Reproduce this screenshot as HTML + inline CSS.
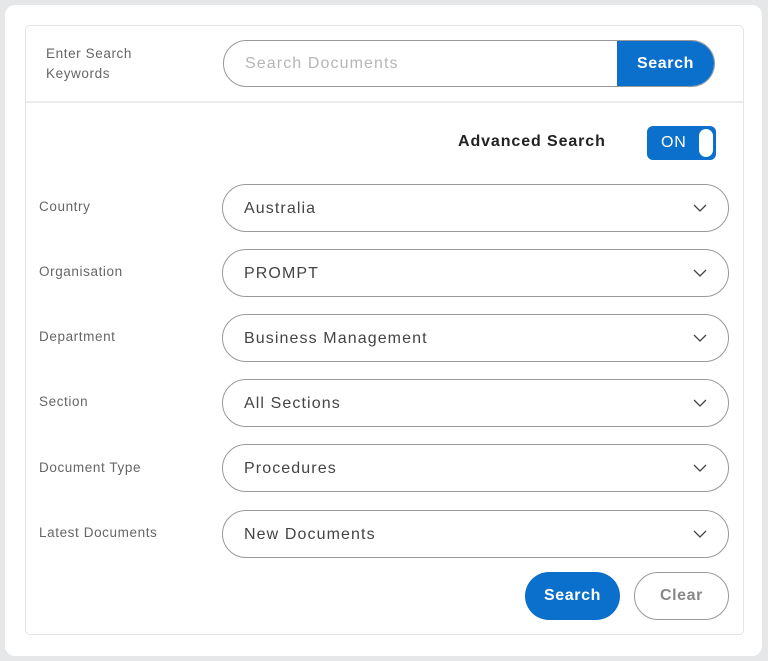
<!DOCTYPE html>
<html><head><style>
*{box-sizing:border-box;margin:0;padding:0}
body{width:768px;height:661px;background:#e6e7e8;font-family:"Liberation Sans",sans-serif;position:relative;overflow:hidden}
.card{position:absolute;left:5px;top:5px;width:757px;height:651px;background:#fff;border-radius:10px}
.inner{position:absolute;left:25px;top:25px;width:719px;height:610px;border:1px solid #e4e4e4;border-radius:5px}
.div{position:absolute;left:26px;top:101px;width:717px;height:2px;background:#ececec}
.lab{position:absolute;color:#666;font-size:13.5px;letter-spacing:0.6px}
.sbox{position:absolute;left:223px;top:40px;width:492px;height:47px;border:1px solid #999;border-radius:24px;overflow:hidden}
.sbox span{position:absolute;left:21px;top:14px;color:#b5b5b5;font-size:16px;letter-spacing:1.1px}
.sbtn{position:absolute;right:0;top:0;width:97px;height:47px;background:#0b6fcc;color:#fff;font-weight:bold;font-size:16px;text-align:center;line-height:46px;letter-spacing:0.6px}
.adv{position:absolute;left:458px;top:133px;font-weight:bold;font-size:16px;color:#222;letter-spacing:0.9px}
.tog{position:absolute;left:647px;top:126px;width:69px;height:34px;background:#0b6fcc;border-radius:6px;color:#fff;font-size:16px}
.tog span{position:absolute;left:14px;top:8px;letter-spacing:0.8px}
.tog i{position:absolute;right:3px;top:3px;width:14px;height:28px;background:#fff;border-radius:7px}
.sel{position:absolute;left:222px;width:507px;height:48px;border:1px solid #999;border-radius:24px;font-size:16px;color:#444;letter-spacing:1.1px}
.sel span{position:absolute;left:21px;top:15px}
.sel svg{position:absolute;right:21px;top:19px}
.b1{position:absolute;left:525px;top:572px;width:95px;height:48px;background:#0b6fcc;border-radius:24px;color:#fff;font-weight:bold;font-size:16px;text-align:center;line-height:48px;letter-spacing:0.6px}
.b2{position:absolute;left:634px;top:572px;width:95px;height:48px;border:1px solid #999;border-radius:24px;color:#888;font-weight:bold;font-size:16px;text-align:center;line-height:46px;letter-spacing:0.6px}
</style></head><body>
<div class="card"></div><div class="inner"></div><div class="div"></div>
<div class="lab" style="left:46px;top:44px;line-height:20px">Enter Search<br>Keywords</div>
<div class="sbox"><span>Search Documents</span><div class="sbtn">Search</div></div>
<div class="adv">Advanced Search</div>
<div class="tog"><span>ON</span><i></i></div>
<div class="lab" style="left:39px;top:199px">Country</div>
<div class="sel" style="top:184px"><span>Australia</span><svg width="14" height="9"><path d="M1 1l6 6 6-6" fill="none" stroke="#444" stroke-width="1.3"/></svg></div>
<div class="lab" style="left:39px;top:264px">Organisation</div>
<div class="sel" style="top:249px"><span>PROMPT</span><svg width="14" height="9"><path d="M1 1l6 6 6-6" fill="none" stroke="#444" stroke-width="1.3"/></svg></div>
<div class="lab" style="left:39px;top:329px">Department</div>
<div class="sel" style="top:314px"><span>Business Management</span><svg width="14" height="9"><path d="M1 1l6 6 6-6" fill="none" stroke="#444" stroke-width="1.3"/></svg></div>
<div class="lab" style="left:39px;top:394px">Section</div>
<div class="sel" style="top:379px"><span>All Sections</span><svg width="14" height="9"><path d="M1 1l6 6 6-6" fill="none" stroke="#444" stroke-width="1.3"/></svg></div>
<div class="lab" style="left:39px;top:460px">Document Type</div>
<div class="sel" style="top:444px"><span>Procedures</span><svg width="14" height="9"><path d="M1 1l6 6 6-6" fill="none" stroke="#444" stroke-width="1.3"/></svg></div>
<div class="lab" style="left:39px;top:525px">Latest Documents</div>
<div class="sel" style="top:510px"><span>New Documents</span><svg width="14" height="9"><path d="M1 1l6 6 6-6" fill="none" stroke="#444" stroke-width="1.3"/></svg></div>
<div class="b1">Search</div>
<div class="b2">Clear</div>
</body></html>
